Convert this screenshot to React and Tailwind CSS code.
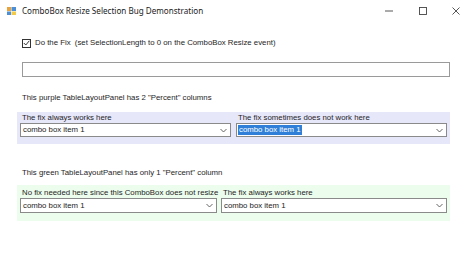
import React from 'react';

const Chevron = () => (
  <svg width="7" height="5" viewBox="0 0 7 5" className="shrink-0">
    <path d="M0.5 1 L3.5 4 L6.5 1" fill="none" stroke="#555" strokeWidth="0.9" />
  </svg>
);

function Combo({ text = 'combo box item 1', selected = false, tall = false }) {
  return (
    <div
      className={`flex ${tall ? 'h-[15px]' : 'h-[14px]'} items-center justify-between border border-[#8a8a8a] bg-white pl-[1px] pr-[3px]`}
    >
      <span
        className={`text-[7.8px] leading-[10px] px-[1px] ${selected ? 'bg-[#2f7fd8] text-white' : 'text-[#222]'}`}
      >
        {text}
      </span>
      <Chevron />
    </div>
  );
}

function AppIcon() {
  return (
    <svg width="9" height="8" viewBox="0 0 9 8">
      <rect x="0" y="0" width="4" height="4" fill="#e8a33a" />
      <rect x="4.5" y="0" width="4.5" height="4" fill="#4d8fd6" />
      <rect x="0" y="4.5" width="4" height="3.5" fill="#4d8fd6" />
      <rect x="4.5" y="4.5" width="4.5" height="3.5" fill="#f3c94a" />
    </svg>
  );
}

export default function App() {
  return (
    <div className="w-[474px] h-[253px] bg-white overflow-hidden font-['Liberation_Sans',Arial,sans-serif] text-[#1e1e1e]">
      {/* title bar */}
      <div className="flex h-[22px] items-center pl-[7px]">
        <AppIcon />
        <span className="ml-[6px] font-['Noto_Sans',sans-serif] text-[8.1px] text-[#222]">
          ComboBox Resize Selection Bug Demonstration
        </span>
        <div className="ml-auto flex items-center">
          <svg width="8" height="8" viewBox="0 0 8 8" className="mr-[26px]">
            <line x1="0" y1="4" x2="8" y2="4" stroke="#444" strokeWidth="0.9" />
          </svg>
          <svg width="8" height="8" viewBox="0 0 8 8" className="mr-[25px]">
            <rect x="0.5" y="0.5" width="7" height="7" fill="none" stroke="#444" strokeWidth="0.9" />
          </svg>
          <svg width="8" height="8" viewBox="0 0 8 8" className="mr-[14px]">
            <path d="M0.5 0.5 L7.5 7.5 M7.5 0.5 L0.5 7.5" stroke="#444" strokeWidth="0.9" />
          </svg>
        </div>
      </div>

      <div className="flex flex-col pl-[22px] pr-[24px] text-[7.8px] leading-[10px]">
        {/* checkbox row */}
        <div className="mt-[15px] flex h-[12px] items-center">
          <div className="flex h-[9px] w-[9px] items-center justify-center border border-[#333] bg-white">
            <svg width="7" height="6" viewBox="0 0 7 6">
              <path d="M0.8 3 L2.8 5 L6.3 0.8" fill="none" stroke="#222" strokeWidth="0.9" />
            </svg>
          </div>
          <span className="ml-[4px] whitespace-pre">
            Do the Fix  (set SelectionLength to 0 on the ComboBox Resize event)
          </span>
        </div>

        {/* textbox */}
        <div className="mt-[13px] h-[15px] border border-[#9a9a9a] bg-white" />

        {/* purple */}
        <div className="mt-[16px]">
          This purple TableLayoutPanel has 2 &quot;Percent&quot; columns
        </div>
      </div>

      <div className="ml-[17px] mr-[24px] mt-[9px] bg-[#e7e7fa] px-[3px] pt-[1px] pb-[7px] text-[7.8px] leading-[10px]">
        <div className="grid grid-cols-2 gap-x-[5px]">
          <div className="flex flex-col">
            <span className="pl-[2px] whitespace-nowrap">The fix always works here</span>
            <Combo />
          </div>
          <div className="flex flex-col">
            <span className="pl-[2px] whitespace-nowrap">The fix sometimes does not work here</span>
            <Combo selected />
          </div>
        </div>
      </div>

      <div className="ml-[22px] mt-[24px] text-[7.8px] leading-[10px]">
        This green TableLayoutPanel has only 1 &quot;Percent&quot; column
      </div>

      <div className="ml-[17px] mr-[24px] mt-[7px] bg-[#edfded] px-[3px] pt-[3px] pb-[8px] text-[7.8px] leading-[10px]">
        <div className="grid grid-cols-[197px_1fr] gap-x-[4px]">
          <div className="flex flex-col">
            <span className="pl-[2px] whitespace-nowrap">No fix needed here since this ComboBox does not resize</span>
            <Combo tall />
          </div>
          <div className="flex flex-col">
            <span className="pl-[2px] whitespace-nowrap">The fix always works here</span>
            <Combo tall />
          </div>
        </div>
      </div>
    </div>
  );
}
